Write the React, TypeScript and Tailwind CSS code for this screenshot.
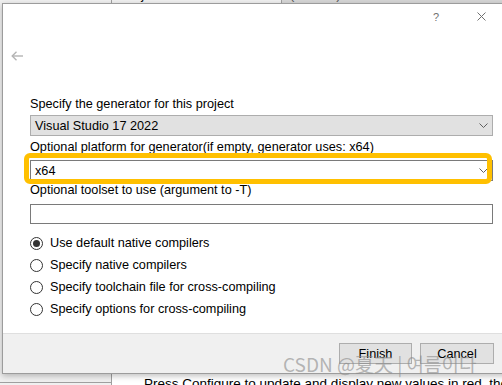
import React from "react";

const Chevron = () => (
  <svg width="9" height="5" viewBox="0 0 9 5" className="shrink-0">
    <polyline points="0.5,0.5 4.5,4.5 8.5,0.5" fill="none" stroke="#5f5f5f" strokeWidth="1" />
  </svg>
);

const Radio = ({ checked, label }: { checked?: boolean; label: string }) => (
  <div className="h-[22px] flex items-center">
    <div className="w-[13px] h-[13px] rounded-full border border-[#333333] bg-white flex items-center justify-center shrink-0">
      {checked && <div className="w-[7px] h-[7px] rounded-full bg-[#333333]" />}
    </div>
    <span className="ml-[7px] leading-[16px]">{label}</span>
  </div>
);

export default function App() {
  return (
    <div className="w-[502px] h-[385px] overflow-hidden flex flex-col bg-[#f0f0f0] font-['Liberation_Sans',Arial,sans-serif] text-[12.7px] text-black">
      {/* background window, top strip */}
      <div className="h-[3px] flex shrink-0 overflow-hidden">
        <div className="w-[112px] bg-[#f0f0f0] border-r border-[#a0a0a0]" />
        <div className="w-[170px] bg-[#f0f0f0] border-r border-[#a0a0a0] overflow-hidden">
          <div className="-mt-[12px] ml-[9px] leading-[14px] text-[13px]">Project</div>
        </div>
        <div className="flex-1 bg-[#d6d6d6] overflow-hidden">
          <div className="-mt-[12px] ml-[8px] leading-[14px] text-[13px] text-[#555]">(custom)</div>
        </div>
      </div>

      {/* dialog */}
      <div className="ml-[2px] w-[520px] h-[371px] shrink-0 border border-[#9c9c9c] bg-white flex flex-col relative z-10 shadow-[0_2px_6px_rgba(0,0,0,0.25)]">
        <div className="flex-1 flex flex-col">
          {/* title bar */}
          <div className="h-[25px] flex items-center shrink-0">
            <span className="ml-[428px] w-[10px] text-center text-[11px] leading-[12px] text-[#707070]">?</span>
            <svg width="9" height="9" viewBox="0 0 9 9" className="ml-[36px]">
              <line x1="0.5" y1="0.5" x2="8.5" y2="8.5" stroke="#707070" strokeWidth="1" />
              <line x1="8.5" y1="0.5" x2="0.5" y2="8.5" stroke="#707070" strokeWidth="1" />
            </svg>
          </div>
          {/* back arrow */}
          <div className="h-[49px] pt-[5px] flex items-center shrink-0">
            <svg width="12" height="10" viewBox="0 0 12 10" className="ml-[8px]">
              <line x1="1" y1="5" x2="12" y2="5" stroke="#b4b4b4" strokeWidth="1.4" />
              <polyline points="5.5,0.8 1.2,5 5.5,9.2" fill="none" stroke="#b4b4b4" strokeWidth="1.4" />
            </svg>
          </div>

          <div className="pl-[27px] flex flex-col">
            <div className="mt-[18px] h-[16px] leading-[16px]">Specify the generator for this project</div>
            <div className="mt-[3px] w-[463px] h-[21px] border border-[#adadad] bg-[#e1e1e1] flex items-center justify-between pl-[4px] pr-[4px]">
              <span className="leading-[16px]">Visual Studio 17 2022</span>
              <Chevron />
            </div>
            <div className="mt-[3px] h-[16px] leading-[16px]">Optional platform for generator(if empty, generator uses: x64)</div>
            <div className="mt-[5px] w-[463px] h-[21px] relative">
              <div className="w-full h-full border border-[#7a7a7a] bg-white flex items-center justify-between pl-[4px] pr-[4px]">
                <span className="leading-[16px]">x64</span>
                <Chevron />
              </div>
              <div className="absolute left-[-6px] top-[-7px] w-[468px] h-[31px] border-[5px] border-[#ffc000] rounded-[6px] z-10 pointer-events-none" />
            </div>
            <div className="mt-[1px] h-[16px] leading-[16px]">Optional toolset to use (argument to -T)</div>
            <div className="mt-[6px] w-[463px] h-[20px] border border-[#7a7a7a] bg-white" />
            <div className="mt-[8px] flex flex-col">
              <Radio checked label="Use default native compilers" />
              <Radio label="Specify native compilers" />
              <Radio label="Specify toolchain file for cross-compiling" />
              <Radio label="Specify options for cross-compiling" />
            </div>
          </div>
        </div>

        {/* footer */}
        <div className="h-[40px] shrink-0 border-t border-[#dfdfdf] bg-[#f0f0f0] flex items-start pt-[9px]">
          <div className="ml-[336px] w-[73px] h-[21px] border border-[#adadad] bg-[#e1e1e1] flex items-center justify-center leading-[16px]">Finish</div>
          <div className="ml-[8px] w-[74px] h-[21px] border border-[#adadad] bg-[#e1e1e1] flex items-center justify-center leading-[16px]">Cancel</div>
        </div>

        {/* watermark */}
        <div className="absolute left-[280px] top-[349px] z-20 whitespace-nowrap font-['Noto_Sans_CJK_KR',sans-serif] text-[19px] leading-[22px] text-[#8a8a8a]/60 pointer-events-none">
          CSDN @夏天 | 여름이다
        </div>
      </div>

      {/* background window, bottom strip */}
      <div className="flex-1 flex overflow-hidden">
        <div className="w-[112px] bg-[#f0f0f0] border-r border-[#a0a0a0] flex flex-col">
          <div className="h-[8px]" />
          <div className="h-[1px] bg-[#a0a0a0]" />
        </div>
        <div className="flex-1 bg-white overflow-hidden">
          <div className="ml-[32px] mt-[2px] whitespace-nowrap text-[13.5px] leading-[16px]">Press Configure to update and display new values in red, then</div>
        </div>
      </div>
    </div>
  );
}
